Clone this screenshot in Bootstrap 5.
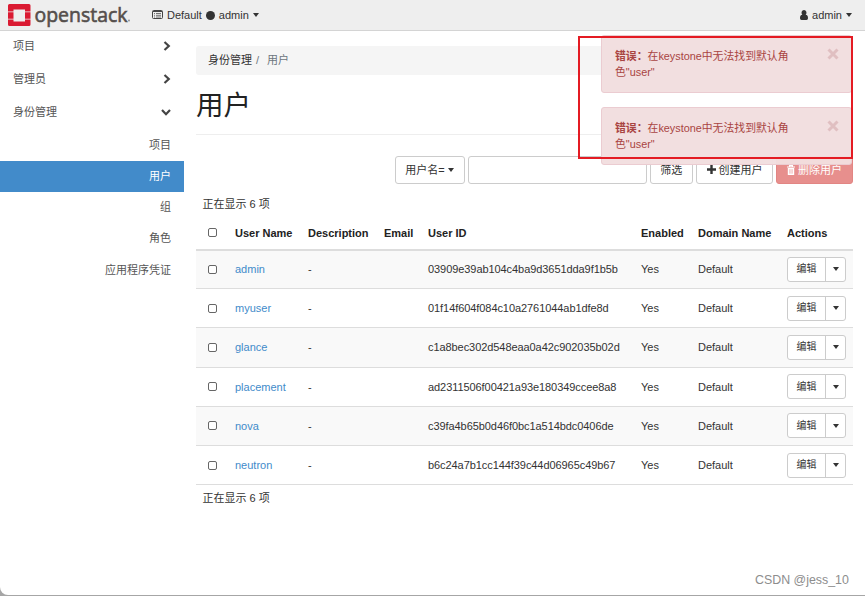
<!DOCTYPE html>
<html lang="zh-CN">
<head>
<meta charset="utf-8">
<meta name="viewport" content="width=device-width, initial-scale=1">
<title>用户 - OpenStack Dashboard</title>
<link href="https://cdn.jsdelivr.net/npm/bootstrap@5.3.0/dist/css/bootstrap.min.css" rel="stylesheet">
<style>
html{background:#a6a6a6;height:100%;overflow:hidden}
body{font-family:"Liberation Sans","Noto Sans CJK SC",sans-serif;font-size:11px;line-height:16px;color:#333;background:transparent;height:100%;overflow:hidden}
.shell{height:595px;background:#fff;border-bottom-left-radius:8px;overflow:hidden}
.topbar{height:31px;background:#eee;border-bottom:1px solid #d4d4d4;padding:0 13px 1px 8px}
.topbar svg{overflow:visible}
.wordmark{font-family:"Open Sans","Noto Sans",sans-serif;font-size:20px;fill:#554f4c;stroke:#554f4c;stroke-width:.6}
.project{margin-left:20px}
.caret{display:inline-block;border:3.5px solid transparent;border-top:4px solid currentColor;border-bottom:0;flex:none}
.dot{width:9px;height:9px;border-radius:50%;background:#333;margin:2px 4px 0}
.side{width:184px;flex:none}
.side a{color:#555;text-decoration:none;display:flex;align-items:center}
.side .group{height:33px;padding:0 13px 3px;justify-content:space-between}
.side .leaf{height:31.4px;padding:0 13px 2px;justify-content:flex-end}
.side .group+.leaf{height:31px}
.side a.current{background:#428bca;color:#fff}
.content-area{width:657px;margin-left:12px;padding-top:15px}
.crumbs{height:29px;background:#f5f5f5;border-radius:3px;padding:0 12px 2px;margin:0}
.page-title{font-size:27.5px;line-height:32px;font-weight:400;margin:14px 0 0;padding-top:1px;border-bottom:1px solid #eee;height:46px;color:#222}
.tools{margin-top:21px;gap:3px}
.ctl{height:28px;border:1px solid #ccc;border-radius:3px;background:#fff;color:#333;font-size:11px;line-height:16px;padding:0 0 1px;display:flex;align-items:center;justify-content:center}
.w-name{width:70px;gap:3px}.w-filter{width:43.5px}.w-create{width:77px;gap:3px}.w-delete{width:77px;gap:3px}
.w-text{width:179px}
.ctl.w-delete{background:#e78f8d;border-color:#e28583;color:#fff}
.count{padding-left:6.5px;height:16px}
.tools+.count{margin-top:12px}
.foot{margin-top:5px}
.users{table-layout:fixed;width:657px;margin:5px 0 0;color:#333}
.users>:not(caption)>*>*{padding:0 0 0 8px;vertical-align:middle;border-bottom:1px solid #ddd;background:none;box-shadow:none;color:inherit;white-space:nowrap}
.users>thead>tr>th{height:32.5px;border-bottom:2px solid #ddd;color:#222}
.users>tbody>tr>td{height:39.2px}
.users>tbody>tr>td:nth-child(5){letter-spacing:-.07px}
.users>tbody>tr:nth-child(odd){background:#f9f9f9}
.users a{color:#428bca;text-decoration:none}
.users>:not(caption)>*>:first-child{padding-left:12px}
.tick{display:block;width:9px;height:9px;margin:0;appearance:none;border:1px solid #666;border-radius:2px;background:#fff}
.edit{height:25px;border:1px solid #ccc;border-radius:3px;background:#fff;width:59px;font-size:10px}
.edit button{border:0;background:none;padding:0;color:#333;font-size:10px;display:flex;align-items:center;justify-content:center}
.edit .go{width:38px;border-right:1px solid #ccc}
.edit .more{flex:1}
.edit .caret{border-width:4px 3px 0}
.notices{position:absolute;left:601px;top:35px;width:251px}
.notice{height:58px;background:rgba(242,222,223,.97);border:1px solid #ebccd1;border-radius:3px;color:#a94442;padding:12px 12px 0 13px;margin-bottom:14px;font-size:10.85px}
.notice p{margin:0;width:184px}
.marker{position:absolute;left:578px;top:36px;width:275px;height:123px;border:2px solid #e41b23}
.credit{position:absolute;left:755px;top:572px;font-size:12.4px;line-height:16px;color:#8d8d8d;white-space:nowrap}
</style>
<script src="https://cdn.jsdelivr.net/npm/bootstrap@5.3.0/dist/js/bootstrap.bundle.min.js"></script>
</head>
<body>
<div class="shell">
  <header class="topbar d-flex align-items-center">
    <svg width="124" height="28" viewBox="0 0 124 28" aria-label="openstack">
      <path fill="#da1a32" d="M1.5 3H21a1.5 1.5 0 0 1 1.5 1.5V10.500H17V8.500H5.500V10.500H0V4.500A1.500 1.500 0 0 1 1.500 3ZM0 11.200h5.500v6.500H0ZM17 11.200h5.500v6.500H17ZM0 18.400h5.500v2.100H17v-2.100h5.500v5.100A1.500 1.500 0 0 1 21 25H1.500A1.500 1.500 0 0 1 0 23.500Z"/>
      <text class="wordmark" x="26.500" y="20.500" textLength="93" lengthAdjust="spacingAndGlyphs">openstack</text>
      <circle cx="121" cy="19.500" r=".9" fill="#888"/>
    </svg>
    <div class="project d-flex align-items-center">
      <svg width="11" height="9" viewBox="0 0 11 9"><rect x=".5" y=".5" width="10" height="8" rx="1" fill="none" stroke="#444"/><path d="M1 1.500h9" stroke="#444"/><path d="M2 3.500h1m1 0h5M2 5.300h1m1 0h5M2 7h1m1 0h5" stroke="#555" stroke-width=".8"/></svg>
      <span class="ms-1">Default</span><span class="dot"></span><span>admin</span><span class="caret ms-1"></span>
    </div>
    <div class="ms-auto d-flex align-items-center">
      <svg width="8" height="10" viewBox="0 0 8 10"><path fill="#333" d="M4 0a2.500 2.700 0 0 1 1.700 4.700C7.400 5 8 6 8 8.300Q8 10 6.500 10h-5Q0 10 0 8.300C0 6 .6 5 2.300 4.700A2.500 2.700 0 0 1 4 0Z"/></svg>
      <span class="ms-1">admin</span><span class="caret ms-1"></span>
    </div>
  </header>
  <div class="d-flex">
    <nav class="side">
      <a class="group" href="#">项目<svg width="8" height="10" viewBox="0 0 8 10"><path d="M1.500 1 5.800 5 1.500 9" fill="none" stroke="#444" stroke-width="2.200"/></svg></a>
      <a class="group" href="#">管理员<svg width="8" height="10" viewBox="0 0 8 10"><path d="M1.500 1 5.800 5 1.500 9" fill="none" stroke="#444" stroke-width="2.200"/></svg></a>
      <a class="group" href="#">身份管理<svg width="10" height="8" viewBox="0 0 10 8"><path d="M1 2 5 6.200 9 2" fill="none" stroke="#444" stroke-width="2.200"/></svg></a>
      <a class="leaf" href="#">项目</a>
      <a class="leaf current" href="#">用户</a>
      <a class="leaf" href="#">组</a>
      <a class="leaf" href="#">角色</a>
      <a class="leaf" href="#">应用程序凭证</a>
    </nav>
    <main class="content-area">
      <div class="crumbs d-flex align-items-center"><span>身份管理</span><span class="text-secondary ms-1">/</span><span class="text-secondary ms-2">用户</span></div>
      <h1 class="page-title">用户</h1>
      <div class="tools d-flex justify-content-end">
        <button class="ctl w-name">用户名=<span class="caret"></span></button>
        <input class="ctl w-text" aria-label="用户名">
        <button class="ctl w-filter">筛选</button>
        <button class="ctl w-create"><svg width="9" height="9" viewBox="0 0 9 9"><path d="M4.500 0v9M0 4.500h9" stroke="#333" stroke-width="2.400"/></svg>创建用户</button>
        <button class="ctl w-delete"><svg width="8" height="10" viewBox="0 0 8 10"><path d="M0 2h8M2.500 2V.6h3V2" fill="none" stroke="#fff" stroke-width="1.100"/><path fill="#fff" d="M.8 3h6.400v7H.8Z"/><path d="M2.700 4.200v4.500m1.300-4.500v4.500m1.300-4.500v4.500" stroke="#e78f8d" stroke-width=".5"/></svg>删除用户</button>
      </div>
      <div class="count">正在显示 6 项</div>
      <table class="table users">
        <colgroup><col style="width:31px"><col style="width:73px"><col style="width:76px"><col style="width:44px"><col style="width:213px"><col style="width:57px"><col style="width:89px"><col style="width:74px"></colgroup>
        <thead><tr><th><input type="checkbox" class="tick"></th><th>User Name</th><th>Description</th><th>Email</th><th>User ID</th><th>Enabled</th><th>Domain Name</th><th>Actions</th></tr></thead>
        <tbody id="rows"></tbody>
      </table>
      <div class="count foot">正在显示 6 项</div>
    </main>
  </div>
</div>
<div class="notices">
  <div class="notice d-flex justify-content-between"><p><strong>错误：</strong>在keystone中无法找到默认角色"user"</p><svg width="12" height="12" viewBox="0 0 12 12"><path d="m1.500 1.500 9 9m0-9-9 9" stroke="#e0bfc1" stroke-width="3"/></svg></div>
  <div class="notice d-flex justify-content-between"><p><strong>错误：</strong>在keystone中无法找到默认角色"user"</p><svg width="12" height="12" viewBox="0 0 12 12"><path d="m1.500 1.500 9 9m0-9-9 9" stroke="#e0bfc1" stroke-width="3"/></svg></div>
</div>
<div class="marker"></div>
<div class="credit">CSDN @jess_10</div>
<script>
const users = [
  ["admin", "03909e39ab104c4ba9d3651dda9f1b5b"],
  ["myuser", "01f14f604f084c10a2761044ab1dfe8d"],
  ["glance", "c1a8bec302d548eaa0a42c902035b02d"],
  ["placement", "ad2311506f00421a93e180349ccee8a8"],
  ["nova", "c39fa4b65b0d46f0bc1a514bdc0406de"],
  ["neutron", "b6c24a7b1cc144f39c44d06965c49b67"]
];
document.getElementById("rows").innerHTML = users.map(([name, id]) => `<tr><td><input type="checkbox" class="tick"></td><td><a href="#">${name}</a></td><td>-</td><td></td><td>${id}</td><td>Yes</td><td>Default</td><td><div class="edit d-flex"><button class="go">编辑</button><button class="more" aria-label="更多"><span class="caret"></span></button></div></td></tr>`).join("");
</script>
</body>
</html>
